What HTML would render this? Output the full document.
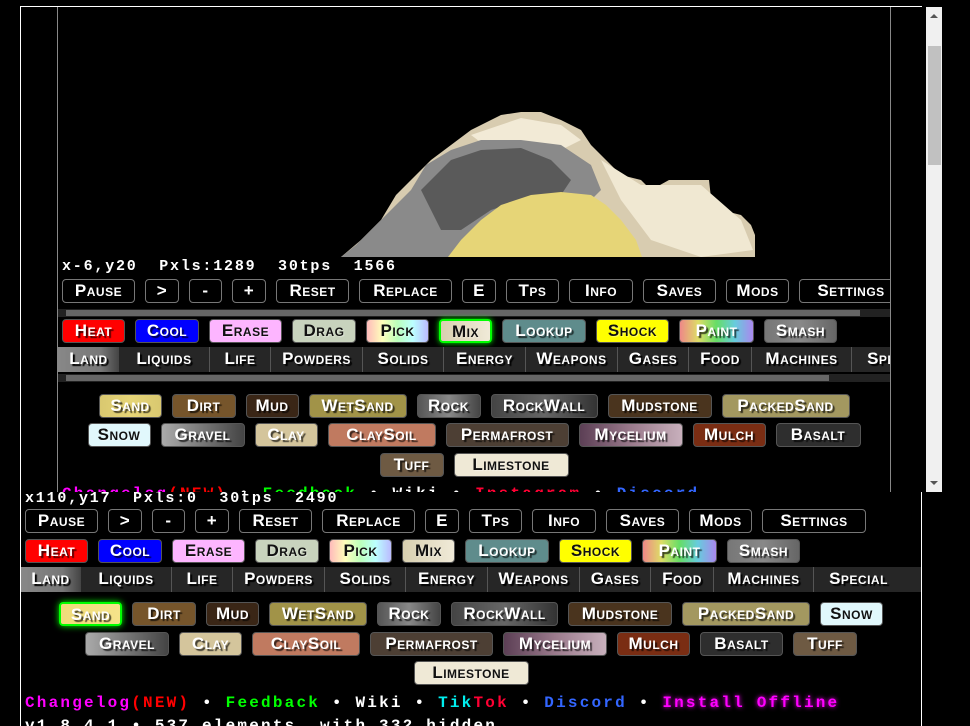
<!DOCTYPE html>
<html><head><meta charset="utf-8"><style>
*{margin:0;padding:0;box-sizing:border-box}
body{width:970px;height:726px;background:#000;overflow:hidden;position:relative;font-family:"Liberation Sans",sans-serif}
.pan{position:absolute;background:#000;overflow:hidden}
.row{position:absolute;display:flex;gap:10px;white-space:nowrap}
.c{justify-content:center}
.b{height:24px;border:1px solid #777;border-radius:4px;color:#fff;font-weight:bold;font-size:17px;font-variant:small-caps;text-align:center;line-height:22px;text-shadow:2px 2px 1px rgba(0,0,0,.7);flex:none;background:#000;letter-spacing:.5px;overflow:hidden}
.t{border-color:#555}
.d{color:#111;text-shadow:1px 1px 1px rgba(255,255,255,.4)}
.coord{position:absolute;color:#fff;font:bold 15px "Liberation Mono",monospace;letter-spacing:1.8px;white-space:pre}
.hs{position:absolute;height:8px;background:#222}
.hs i{position:absolute;left:8px;top:1px;height:6px;background:#666}
.cats{position:absolute;height:25px;background:#262626;display:flex}
.cat{height:25px;line-height:24px;color:#fff;font-weight:bold;font-size:17px;font-variant:small-caps;text-align:center;text-shadow:2px 2px 1px #000;border-left:1px solid #555;flex:none;letter-spacing:.5px;overflow:hidden}
.cat.on{background:linear-gradient(90deg,#888,#777 70%,#444);border-left:none}
.foot{position:absolute;font:bold 16px "Liberation Mono",monospace;letter-spacing:2.2px;white-space:pre;color:#fff}
.el{border-color:#555}
</style></head><body>

<div style="position:absolute;left:20px;top:6px;width:902px;height:1px;background:#fff"></div>
<div style="position:absolute;left:20px;top:6px;width:1px;height:720px;background:#fff"></div>
<div style="position:absolute;left:921px;top:492px;width:1px;height:234px;background:#fff"></div>
<div style="position:absolute;left:926px;top:7px;width:16px;height:485px;background:#f0f0f0">
<div style="position:absolute;left:2px;top:39px;width:13px;height:119px;background:#c1c1c1"></div>
<div style="position:absolute;left:4px;top:7px;width:0;height:0;border-left:4px solid transparent;border-right:4px solid transparent;border-bottom:4px solid #555"></div>
<div style="position:absolute;left:4px;top:474px;width:0;height:0;border-left:4px solid transparent;border-right:4px solid transparent;border-top:4px solid #555"></div>
</div>

<div class="pan" style="left:57px;top:7px;width:834px;height:485px;border-left:1px solid #888;border-right:1px solid #888">
<svg style="position:absolute;left:-57px;top:-7px" width="900" height="270">
<polygon fill="#d8ccb0" points="340,257 360,240 380,220 395,195 410,180 430,160 450,145 470,130 480,125 500,115 520,112 540,112 560,120 580,130 590,145 600,155 610,165 620,175 640,180 650,190 668,180 708,180 710,198 720,210 740,215 750,225 754,235 754,257"/>
<polygon fill="#f2ead6" points="470,135 520,118 560,125 580,140 560,150 520,150 490,150" />
<polygon fill="#f0e8d2" points="600,160 640,185 700,185 740,220 752,250 700,257 650,240 620,200"/>
<polygon fill="#8a8a8a" points="340,257 355,245 375,225 395,205 410,190 425,165 450,150 480,140 520,140 560,145 590,165 600,190 590,200 560,195 520,205 490,230 470,257"/>
<polygon fill="#5a5a5a" points="420,190 450,160 480,150 520,148 550,160 570,180 560,195 520,200 490,210 460,230 440,230"/>
<polygon fill="#e6d577" points="447,257 460,240 480,220 500,205 530,195 560,192 590,195 605,205 620,220 635,240 641,257"/>
</svg>
<div class="coord" style="left:4px;top:251px">x-6,y20  Pxls:1289  30tps  1566</div>
<div class="row" style="left:4px;top:272px">
<div class="b" style="width:73px">Pause</div><div class="b" style="width:34px">&gt;</div><div class="b" style="width:33px">-</div><div class="b" style="width:34px">+</div><div class="b" style="width:73px">Reset</div><div class="b" style="width:93px">Replace</div><div class="b" style="width:34px">E</div><div class="b" style="width:53px">Tps</div><div class="b" style="width:64px">Info</div><div class="b" style="width:73px">Saves</div><div class="b" style="width:63px">Mods</div><div class="b" style="width:104px">Settings</div>
</div>
<div class="hs" style="left:0;top:302px;width:832px"><i style="width:794px"></i></div>
<div class="row" style="left:4px;top:312px">
<div class="b t" style="width:63px;background:#f00">Heat</div><div class="b t" style="width:64px;background:#00f">Cool</div><div class="b t d" style="width:73px;background:#fdb5ff">Erase</div><div class="b t d" style="width:64px;background:#c8d3bd">Drag</div><div class="b t d" style="width:63px;background:linear-gradient(90deg,#fbb,#ffb,#bfb,#bff,#bbf)">Pick</div><div class="b t d" style="width:53px;background:linear-gradient(90deg,#d8d0b0,#f0ead8);border:2px solid #0f0;box-shadow:0 0 6px #0f0">Mix</div><div class="b t" style="width:84px;background:#5f8c8c">Lookup</div><div class="b t d" style="width:73px;background:#ff0">Shock</div><div class="b t" style="width:75px;background:linear-gradient(90deg,#e88,#dd6,#6d6,#6cd,#a8e)">Paint</div><div class="b t" style="width:73px;background:linear-gradient(90deg,#777,#888,#666)">Smash</div>
</div>
<div class="cats" style="left:0;top:340px;width:832px">
<div class="cat on" style="width:61px">Land</div><div class="cat" style="width:90px;border-left:none">Liquids</div><div class="cat" style="width:61px">Life</div><div class="cat" style="width:92px">Powders</div><div class="cat" style="width:81px">Solids</div><div class="cat" style="width:82px">Energy</div><div class="cat" style="width:92px">Weapons</div><div class="cat" style="width:71px">Gases</div><div class="cat" style="width:63px">Food</div><div class="cat" style="width:100px">Machines</div><div class="cat" style="width:90px">Special</div>
</div>
<div class="hs" style="left:0;top:367px;width:832px"><i style="width:763px"></i></div>
<div class="row c" style="left:0;width:832px;top:387px">
<div class="b el" style="width:63px;background:linear-gradient(90deg,#d9c870,#e6d577,#d9c870)">Sand</div><div class="b el" style="width:64px;background:#76552b">Dirt</div><div class="b el" style="width:53px;background:#3a2616">Mud</div><div class="b el" style="width:98px;background:#a19348">WetSand</div><div class="b el" style="width:64px;background:linear-gradient(90deg,#555,#888,#444)">Rock</div><div class="b el" style="width:107px;background:linear-gradient(90deg,#444,#666,#333)">RockWall</div><div class="b el" style="width:104px;background:#4a341e">Mudstone</div><div class="b el" style="width:128px;background:#a39860">PackedSand</div>
</div>
<div class="row c" style="left:0;width:832px;top:416px">
<div class="b el d" style="width:63px;background:#e1f8fc">Snow</div><div class="b el" style="width:84px;background:linear-gradient(90deg,#aaa,#777,#444)">Gravel</div><div class="b el" style="width:63px;background:#d4c59c">Clay</div><div class="b el" style="width:108px;background:#c07a60">ClaySoil</div><div class="b el" style="width:123px;background:#4d3f34">Permafrost</div><div class="b el" style="width:104px;background:linear-gradient(90deg,#5c3f55,#9a7a8c,#c8b0bc)">Mycelium</div><div class="b el" style="width:73px;background:#7a2d13">Mulch</div><div class="b el" style="width:85px;background:#2e2e2e">Basalt</div>
</div>
<div class="row c" style="left:0;width:832px;top:446px">
<div class="b el" style="width:64px;background:#6e5a43">Tuff</div><div class="b el d" style="width:115px;background:#efe9d6">Limestone</div>
</div>
<div class="foot" style="left:4px;top:478px"><span style="color:#f0f">Changelog</span><span style="color:#f00">(NEW)</span> • <span style="color:#0f0">Feedback</span> • Wiki • <span style="color:#f03">Instagram</span> • <span style="color:#36f">Discord</span></div>
</div>

<div class="pan" style="left:21px;top:492px;width:900px;height:234px">
<div class="coord" style="left:4px;top:-2px">x110,y17  Pxls:0  30tps  2490</div>
<div class="row" style="left:4px;top:17px">
<div class="b" style="width:73px">Pause</div><div class="b" style="width:34px">&gt;</div><div class="b" style="width:33px">-</div><div class="b" style="width:34px">+</div><div class="b" style="width:73px">Reset</div><div class="b" style="width:93px">Replace</div><div class="b" style="width:34px">E</div><div class="b" style="width:53px">Tps</div><div class="b" style="width:64px">Info</div><div class="b" style="width:73px">Saves</div><div class="b" style="width:63px">Mods</div><div class="b" style="width:104px">Settings</div>
</div>
<div class="row" style="left:4px;top:47px">
<div class="b t" style="width:63px;background:#f00">Heat</div><div class="b t" style="width:64px;background:#00f">Cool</div><div class="b t d" style="width:73px;background:#fdb5ff">Erase</div><div class="b t d" style="width:64px;background:#c8d3bd">Drag</div><div class="b t d" style="width:63px;background:linear-gradient(90deg,#fbb,#ffb,#bfb,#bff,#bbf)">Pick</div><div class="b t d" style="width:53px;background:linear-gradient(90deg,#d8d0b0,#f0ead8)">Mix</div><div class="b t" style="width:84px;background:#5f8c8c">Lookup</div><div class="b t d" style="width:73px;background:#ff0">Shock</div><div class="b t" style="width:75px;background:linear-gradient(90deg,#e88,#dd6,#6d6,#6cd,#a8e)">Paint</div><div class="b t" style="width:73px;background:linear-gradient(90deg,#777,#888,#666)">Smash</div>
</div>
<div class="cats" style="left:-1px;top:75px;width:901px">
<div class="cat on" style="width:61px">Land</div><div class="cat" style="width:90px;border-left:none">Liquids</div><div class="cat" style="width:61px">Life</div><div class="cat" style="width:92px">Powders</div><div class="cat" style="width:81px">Solids</div><div class="cat" style="width:82px">Energy</div><div class="cat" style="width:92px">Weapons</div><div class="cat" style="width:71px">Gases</div><div class="cat" style="width:63px">Food</div><div class="cat" style="width:100px">Machines</div><div class="cat" style="width:90px">Special</div>
</div>
<div class="row c" style="left:0;width:900px;top:110px">
<div class="b el" style="width:63px;background:linear-gradient(90deg,#f0dc7a,#f5e38a);border:2px solid #0f0;box-shadow:0 0 7px #0f0">Sand</div><div class="b el" style="width:64px;background:#76552b">Dirt</div><div class="b el" style="width:53px;background:#3a2616">Mud</div><div class="b el" style="width:98px;background:#a19348">WetSand</div><div class="b el" style="width:64px;background:linear-gradient(90deg,#555,#888,#444)">Rock</div><div class="b el" style="width:107px;background:linear-gradient(90deg,#444,#666,#333)">RockWall</div><div class="b el" style="width:104px;background:#4a341e">Mudstone</div><div class="b el" style="width:128px;background:#a39860">PackedSand</div><div class="b el d" style="width:63px;background:#e1f8fc">Snow</div>
</div>
<div class="row c" style="left:0;width:900px;top:140px">
<div class="b el" style="width:84px;background:linear-gradient(90deg,#aaa,#777,#444)">Gravel</div><div class="b el" style="width:63px;background:#d4c59c">Clay</div><div class="b el" style="width:108px;background:#c07a60">ClaySoil</div><div class="b el" style="width:123px;background:#4d3f34">Permafrost</div><div class="b el" style="width:104px;background:linear-gradient(90deg,#5c3f55,#9a7a8c,#c8b0bc)">Mycelium</div><div class="b el" style="width:73px;background:#7a2d13">Mulch</div><div class="b el" style="width:83px;background:#2e2e2e">Basalt</div><div class="b el" style="width:64px;background:#6e5a43">Tuff</div>
</div>
<div class="row c" style="left:0;width:900px;top:169px">
<div class="b el d" style="width:115px;background:#efe9d6">Limestone</div>
</div>
<div class="foot" style="left:4px;top:202px"><span style="color:#f0f">Changelog</span><span style="color:#f00">(NEW)</span> • <span style="color:#0f0">Feedback</span> • Wiki • <span style="color:#0ee">Tik</span><span style="color:#f03">Tok</span> • <span style="color:#36f">Discord</span> • <span style="color:#f0f;text-shadow:0 0 5px #f0f">Install Offline</span></div>
<div class="foot" style="left:4px;top:225px">v1.8.4.1 • 537 elements, with 332 hidden</div>
</div>
</body></html>
